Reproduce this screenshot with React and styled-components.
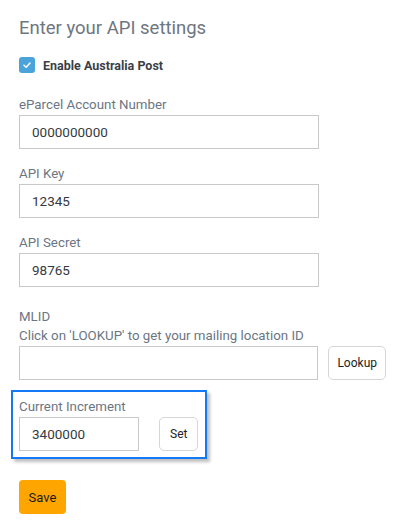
import React from 'react';
import styled, { createGlobalStyle } from 'styled-components';

const GlobalStyle = createGlobalStyle`
  html, body {
    margin: 0;
    padding: 0;
    background: #fff;
  }
  body {
    font-family: Roboto, "Liberation Sans", sans-serif;
  }
`;

const Page = styled.div`
  width: 405px;
  height: 528px;
  box-sizing: border-box;
  padding: 16px 19px 0 19px;
  font-family: Roboto, "Liberation Sans", sans-serif;
`;

const Title = styled.h2`
  margin: 0 0 16px 0;
  font-size: 18.5px;
  font-weight: 400;
  color: #6e7681;
  line-height: 24px;
`;

const CheckRow = styled.label`
  display: flex;
  align-items: center;
  gap: 8px;
  height: 18px;
  margin-bottom: 22px;
  font-size: 12.5px;
  font-weight: 700;
  color: #3a3f47;
`;

const CheckBox = styled.span`
  width: 16px;
  height: 16px;
  border-radius: 3px;
  background: #4ba3db;
  display: flex;
  align-items: center;
  justify-content: center;
`;

const Field = styled.div`
  display: flex;
  flex-direction: column;
  margin-bottom: ${p => p.$gap ?? 16}px;
`;

const Label = styled.div`
  font-size: 13.3px;
  line-height: 17px;
  color: #6b7683;
  margin-bottom: 2px;
`;

const Row = styled.div`
  display: flex;
  align-items: center;
  gap: ${p => p.$gap || 10}px;
`;

const Input = styled.input`
  box-sizing: border-box;
  width: ${p => p.$width || 300}px;
  height: 34px;
  border: 1px solid #c9c9c9;
  border-radius: 0;
  padding: 0 12px;
  font-family: inherit;
  font-size: 13.5px;
  color: #343a40;
  outline: none;
  margin: 0;
`;

const Button = styled.button`
  box-sizing: border-box;
  height: 34px;
  padding: 0 ${p => p.$pad || 8}px;
  border: 1px solid #d6d6d6;
  border-radius: 5px;
  background: #fff;
  font-family: inherit;
  font-size: 12px;
  color: #222;
  cursor: pointer;
`;

const Highlight = styled.div`
  margin: 0 0 21px -8px;
  width: 196px;
  box-sizing: border-box;
  border: 2px solid #1479f6;
  padding: 6px 0 6px 6px;
  box-shadow: 3px 3px 3px rgba(0, 0, 0, 0.25);
`;

const SaveButton = styled.button`
  box-sizing: border-box;
  width: 47px;
  height: 34px;
  border: none;
  border-radius: 4px;
  background: #ffa500;
  font-family: inherit;
  font-size: 13px;
  color: #1b1b1b;
  cursor: pointer;
`;

export default function App() {
  return (
    <Page>
      <GlobalStyle />
      <Title>Enter your API settings</Title>
      <CheckRow>
        <CheckBox>
          <svg width="10" height="10" viewBox="0 0 10 10">
            <path d="M2 5.2 L4.2 7.2 L8 3" fill="none" stroke="#fff" strokeWidth="1.5" strokeLinecap="round" strokeLinejoin="round" />
          </svg>
        </CheckBox>
        Enable Australia Post
      </CheckRow>

      <Field>
        <Label>eParcel Account Number</Label>
        <Input defaultValue="0000000000" />
      </Field>

      <Field>
        <Label>API Key</Label>
        <Input defaultValue="12345" />
      </Field>

      <Field $gap={21}>
        <Label>API Secret</Label>
        <Input defaultValue="98765" />
      </Field>

      <Field $gap={10}>
        <Label>MLID</Label>
        <Label>Click on 'LOOKUP' to get your mailing location ID</Label>
        <Row>
          <Input defaultValue="" />
          <Button>Lookup</Button>
        </Row>
      </Field>

      <Highlight>
        <Label>Current Increment</Label>
        <Row $gap={20}>
          <Input $width={120} defaultValue="3400000" />
          <Button $pad={10}>Set</Button>
        </Row>
      </Highlight>

      <SaveButton>Save</SaveButton>
    </Page>
  );
}
